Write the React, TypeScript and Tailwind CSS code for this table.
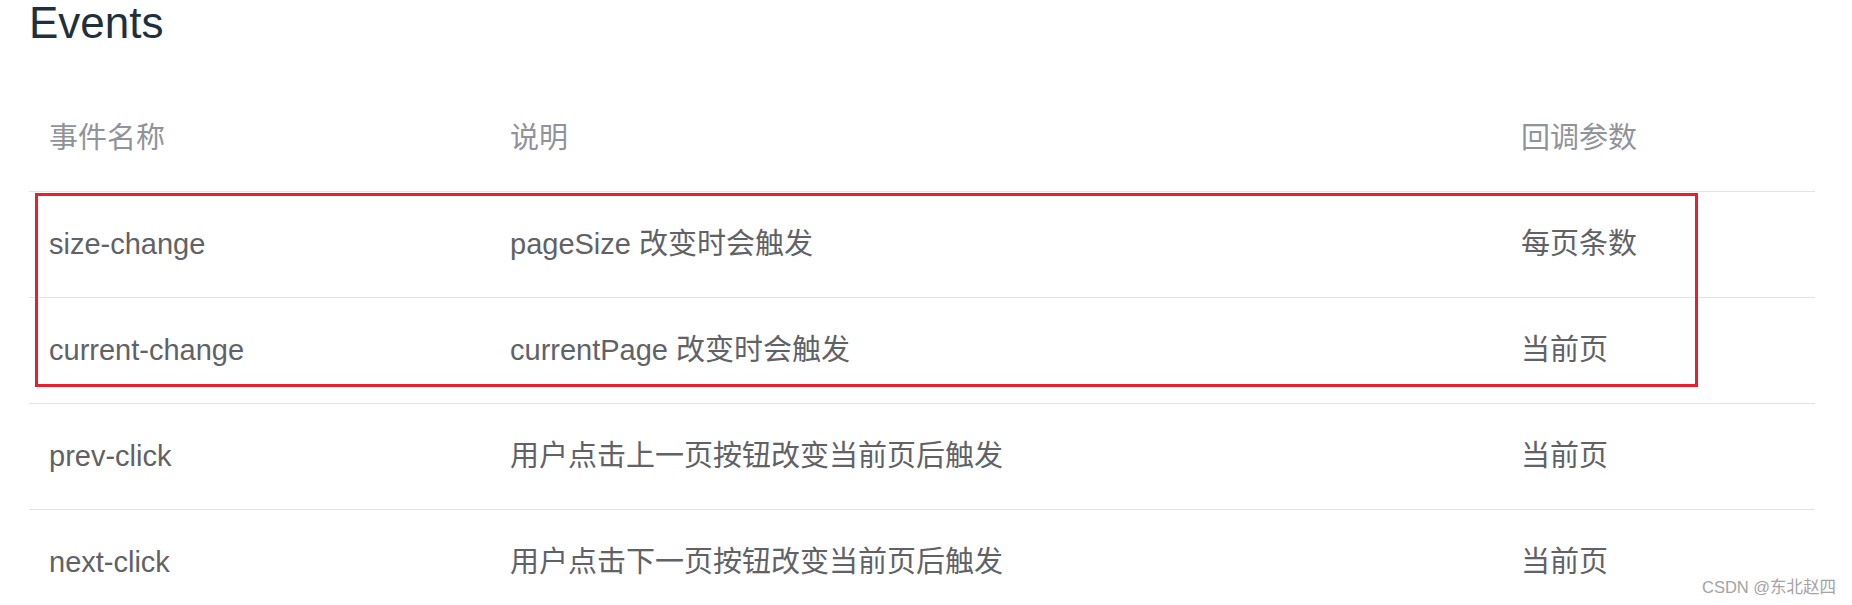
const rows = [
  { name: 'size-change', desc: 'pageSize 改变时会触发', param: '每页条数' },
  { name: 'current-change', desc: 'currentPage 改变时会触发', param: '当前页' },
  { name: 'prev-click', desc: '用户点击上一页按钮改变当前页后触发', param: '当前页' },
  { name: 'next-click', desc: '用户点击下一页按钮改变当前页后触发', param: '当前页' },
];

const font = { fontFamily: '"Liberation Sans", "Noto Sans CJK SC", sans-serif' };

export default function App() {
  return (
    <div className="relative h-[605px] w-[1852px] overflow-hidden bg-white" style={font}>
      <div className="pl-[29px] pr-[37px]">
        <h3 className="text-[44px] leading-[46px] font-normal text-[#1f2f3d] mb-[40px]">Events</h3>

        {/* table */}
        <div className="text-[29px]">
          <div className="grid grid-cols-[461px_1011px_1fr] h-[106px] items-center border-b border-[#e1e4ea] text-[#909399]">
            <div className="pl-[20px]">事件名称</div>
            <div className="pl-[20px]">说明</div>
            <div className="pl-[20px]">回调参数</div>
          </div>
          {rows.map((r) => (
            <div
              key={r.name}
              className="grid grid-cols-[461px_1011px_1fr] h-[106px] items-center border-b border-[#e1e4ea] text-[#606266]"
            >
              <div className="pl-[20px]">{r.name}</div>
              <div className="pl-[20px]">{r.desc}</div>
              <div className="pl-[20px]">{r.param}</div>
            </div>
          ))}
        </div>
      </div>

      {/* red highlight annotation */}
      <div className="absolute left-[35px] top-[193px] w-[1663px] h-[194px] border-[3px] border-[#e8202b]" />

      {/* watermark */}
      <div className="absolute left-[1702px] top-[576px] text-[16.5px] leading-[22px] text-[#a3a3a3]">CSDN @东北赵四</div>
    </div>
  );
}
